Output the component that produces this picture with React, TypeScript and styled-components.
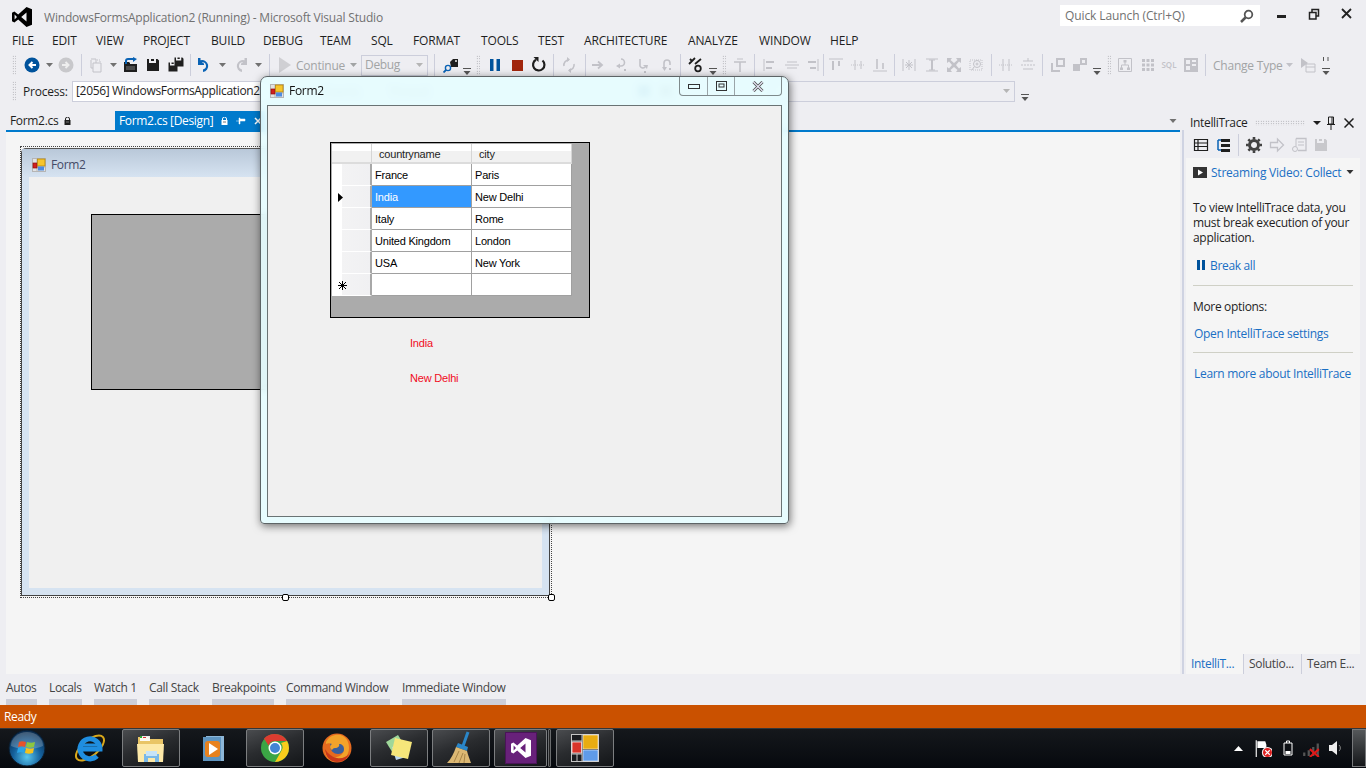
import React from 'react';
import styled, { createGlobalStyle } from 'styled-components';

const ui = `"Open Sans", "Noto Sans", sans-serif`;
const DIS = '#c2c2c8';
const DARK = '#1e1e1e';
const BLUE = '#00539c';
const LINK = '#1a6fc4';

const Global = createGlobalStyle`
  html, body { margin: 0; padding: 0; width: 1366px; height: 768px; overflow: hidden; background: #eeeef2; }
  #root { width: 1366px; height: 768px; }
  * { box-sizing: border-box; }
`;

const Page = styled.div`
  position: relative; width: 1366px; height: 768px; display: flex; flex-direction: column;
  background: #eeeef2; color: ${DARK}; font: 12px/16px ${ui}; letter-spacing: -0.33px; overflow: hidden;
`;
const TitleBar = styled.header`
  height: 30px; display: flex; align-items: center; padding: 4px 0 0 12px; flex: none;
`;
const AppTitle = styled.div`margin: 1px 0 0 12px; color: #717171; flex: 1; font-size: 12px; letter-spacing: -0.19px;`;
const QuickLaunch = styled.div`
  width: 200px; height: 21px; background: #fff; display: flex; align-items: center; justify-content: space-between;
  padding: 0 6px 0 5px; color: #717171; margin-top: -3px; letter-spacing: -0.1px;
`;
const WinControls = styled.div`display: flex; margin: -6px 4px 0 6px; width: 96px; justify-content: space-around;`;
const MenuBar = styled.nav`height: 22px; display: flex; align-items: center; padding-left: 12px; flex: none;`;
const MenuItem = styled.span<{ $w: number }>`width: ${p => p.$w}px; flex: none; letter-spacing: -0.15px;`;
const ToolBar = styled.div<{ $h: number }>`height: ${p => p.$h}px; display: flex; align-items: center; padding-left: 12px; flex: none; color: ${DIS};`;
const Cell = styled.div<{ $w: number }>`
  width: ${p => p.$w}px; flex: none; display: flex; align-items: center; justify-content: center; height: 22px;
`;
const Grip = styled.div`
  width: 4px; height: 20px; flex: none;
  background-image: radial-gradient(#9a9aa0 0.7px, transparent 0.8px); background-size: 2.5px 2.5px;
`;
const Sep = styled.div`width: 1px; height: 22px; background: #cccedb;`;
const ToolText = styled.div<{ $w: number; $dark?: boolean }>`
  width: ${p => p.$w}px; flex: none; padding: 1px 0 0 4px; white-space: nowrap; letter-spacing: -0.22px; color: ${p => (p.$dark ? DARK : '#a2a4a5')};
`;
const Combo = styled.div<{ $w: number; $white?: boolean }>`
  width: ${p => p.$w}px; height: 21px; flex: none; border: 1px solid #cccedb; background: ${p => (p.$white ? '#fff' : 'transparent')};
  color: ${p => (p.$white ? DARK : '#a2a4a5')}; display: flex; align-items: center; justify-content: space-between;
  padding: 0 4px 0 3px; white-space: nowrap; overflow: hidden;
`;
const Spacer = styled.div<{ $w: number }>`width: ${p => p.$w}px; flex: none;`;
const Swatch = styled.div<{ $c: string }>`width: 12px; height: 12px; background: ${p => p.$c};`;
const Workspace = styled.div`flex: none; height: 570px; display: flex;`;
const DocColumn = styled.div`width: 1180px; padding-left: 6px; display: flex; flex-direction: column; flex: none;`;
const DocTabs = styled.div`
  height: 28px; flex: none; display: flex; align-items: flex-end; border-bottom: 2px solid #007acc;
`;
const Tab = styled.div<{ $w: number; $active?: boolean }>`
  width: ${p => p.$w}px; height: 19px; flex: none; display: flex; align-items: center; gap: ${p => (p.$active ? 8 : 6)}px; padding: 1px 0 0 4px; white-space: nowrap;
  background: ${p => (p.$active ? '#007acc' : 'transparent')}; color: ${p => (p.$active ? '#fff' : DARK)};
`;
const TabMenu = styled.div`margin-left: auto; height: 19px; display: flex; align-items: center; margin-right: 3px;`;
const Designer = styled.main`flex: 1; background: #f5f5f5; padding: 14px 0 0 14px;`;
const Selection = styled.div`
  position: relative; width: 532px; height: 452px; padding: 1px 1px 1px 0; border: 1px dotted #444;
`;
const Handle = styled.span<{ $left: string }>`
  position: absolute; left: ${p => p.$left}; bottom: -4px; width: 7px; height: 7px; margin-left: -3px; background: #fff; border: 1px solid #000; border-radius: 2px;
`;
const DesignForm = styled.div`
  height: 100%; border: 1px solid #444; border-top-left-radius: 5px; border-top-right-radius: 5px; border-top-color: #555;
  background: #d6e3f1; display: flex; flex-direction: column;
`;
const DesignTitle = styled.div`
  height: 28px; flex: none; display: flex; align-items: center; gap: 5px; padding: 4px 0 0 10px; color: #444a66; font-size: 12px;
  background: linear-gradient(#b9c8d9, #d6e3f1);
`;
const DesignClient = styled.div`flex: 1; margin: 0 7px 7px; background: #f0f0f0; padding: 37px 0 0 62px;`;
const GridPlaceholder = styled.div`width: 260px; height: 176px; background: #ababab; border: 1px solid #000;`;
const Splitter = styled.div`width: 2px; margin: 26px 2px 0 2px; height: 544px; background: #cfd3e2; flex: none;`;
const ToolPanel = styled.aside`width: 174px; flex: none; display: flex; flex-direction: column;`;
const PanelHead = styled.div`height: 28px; display: flex; align-items: flex-end; padding: 0 0 2px 4px; gap: 6px; flex: none;`;
const PanelTitle = styled.span`width: 65px; flex: none; margin-bottom: -1px;`;
const PanelGrip = styled.div`
  width: 50px; height: 6px; margin: 0 2px 4px -6px; background-image: radial-gradient(#9a9aa0 0.6px, transparent 0.7px); background-size: 2.5px 2.5px;
`;
const PanelClose = styled.span`margin: 0 0 2px 3px; display: flex;`;
const PanelBar = styled.div`height: 26px; display: flex; align-items: center; flex: none; padding-left: 4px;`;
const PanelBody = styled.div`flex: 1; background: #f5f5f5; padding: 6px 7px 0 7px; font-size: 12px; line-height: 15px;`;
const StreamRow = styled.div`display: flex; align-items: center; gap: 4px; height: 16px; margin-bottom: 20px; color: ${LINK}; white-space: nowrap; letter-spacing: -0.22px;`;
const Caret = styled.span`margin-left: auto; margin-right: -1px; display: inline-flex;`;
const Para = styled.p`margin: 0; width: 165px; letter-spacing: -0.3px;`;
const BreakRow = styled.div`display: flex; align-items: center; gap: 5px; margin: 12px 0 12px 4px; color: ${LINK}; height: 16px;`;
const Rule = styled.hr`border: 0; height: 1px; background: #cfd0c6; margin: 0; width: 160px;`;
const PanelLink = styled.div<{ $top: number; $bottom: number }>`color: ${LINK}; margin: ${p => p.$top}px 0 ${p => p.$bottom}px 1px; white-space: nowrap; line-height: 15px; letter-spacing: -0.3px;`;
const PanelLabel = styled.div`color: ${DARK}; margin-top: 13px; line-height: 15px;`;
const PanelTabs = styled.div`height: 20px; flex: none; display: flex; background: #eeeef2;`;
const PanelTab = styled.div<{ $w: number; $active?: boolean; $divided?: boolean }>`
  width: ${p => p.$w}px; flex: none; padding-left: 5px; line-height: 20px; white-space: nowrap;
  background: ${p => (p.$active ? '#f5f5f5' : 'transparent')}; color: ${p => (p.$active ? LINK : '#444')};
  border-right: ${p => (p.$active || p.$divided ? '1px solid #cccedb' : 'none')};
`;
const BottomTabs = styled.div`height: 31px; display: flex; gap: 12px; padding-left: 6px; flex: none;`;
const BottomTab = styled.div<{ $w: number }>`
  width: ${p => p.$w}px; flex: none; display: flex; flex-direction: column; justify-content: flex-end; color: #444; white-space: nowrap;
  &::after { content: ''; display: block; height: 6px; margin-top: 3px; background: #ccced9; }
`;
const StatusBar = styled.footer`height: 23px; background: #ca5100; color: #fff; padding-left: 4px; line-height: 24px; flex: none;`;
const Taskbar = styled.div`
  height: 40px; flex: none; display: flex; align-items: stretch; background: linear-gradient(#15181c, #06090e); border-top: 1px solid #33363a; padding-bottom: 1px;
`;
const Slot = styled.div<{ $w: number; $pl?: number }>`width: ${p => p.$w}px; padding-left: ${p => p.$pl ?? 0}px; flex: none; display: flex; align-items: center; justify-content: center;`;
const TaskButton = styled.div<{ $w: number; $ml?: number }>`
  width: ${p => p.$w}px; margin-left: ${p => p.$ml ?? 0}px; flex: none; display: flex; align-items: center; justify-content: center;
  border: 1px solid #7c7e80; border-radius: 2px; background: linear-gradient(160deg, #4a4c4f 0%, #2a2c2f 45%, #131518 100%);
`;
const TaskSep = styled.div`width: 3px; margin-left: 1px; border: 1px solid #6a6c6e; border-radius: 1px; background: #222;`;
const Tray = styled.div`margin-left: auto; display: flex; align-items: center;`;
const TrayCell = styled.div<{ $w: number }>`width: ${p => p.$w}px; flex: none; display: flex; justify-content: center;`;
const ShowDesktop = styled.div`width: 14px; height: 100%; border: 1px solid #77797b; background: linear-gradient(#55585a, #15171a);`;

/* floating running window */
const RunWindow = styled.section`
  position: absolute; left: 260px; top: 76px; width: 529px; height: 448px; border: 1px solid #5d6466; border-radius: 7px 7px 4px 4px;
  background: rgba(230, 253, 255, 0.9); backdrop-filter: blur(3px); box-shadow: 1px 2px 9px rgba(0, 0, 0, 0.55);
  display: flex; flex-direction: column; padding: 0 6px 6px; letter-spacing: 0;
`;
const RunTitle = styled.div`height: 28px; flex: none; display: flex; align-items: center; gap: 5px; padding-left: 3px; letter-spacing: -0.3px; color: #111;`;
const Caption = styled.div`
  margin-left: auto; align-self: flex-start; height: 19px; width: 103px; display: flex; border: 1px solid #7f8a8c; border-top: none; border-radius: 0 0 4px 4px;
`;
const CapBtn = styled.div<{ $w: number; $last?: boolean }>`
  width: ${p => p.$w}px; flex: none; display: flex; align-items: center; justify-content: center; border-right: ${p => (p.$last ? 'none' : '1px solid #9aa5a8')};
`;
const RunClient = styled.div`
  flex: 1; background: #f0f0f0; border: 1px solid #6a7374; padding: 36px 0 0 62px; font: 11px/13px "Liberation Sans", Arial, sans-serif; letter-spacing: -0.2px;
`;
const DataGrid = styled.div`width: 260px; height: 176px; background: #ababab; border: 1px solid #000; padding: 1px 0 0 1px;`;
const GridHeader = styled.div`display: grid; grid-template-columns: 40px 100px 100px; height: 20px;`;
const HeadCell = styled.div`
  background: linear-gradient(#fff 40%, #f1f1f1 40%, #f1f1f1); border-right: 1px solid #d5d5d5; border-bottom: 2px solid #dcdcdc; padding: 4px 0 0 7px; height: 20px;
`;
const GridRow = styled.div`display: grid; grid-template-columns: 40px 100px 100px; height: 22px;`;
const RowHead = styled.div`
  background: linear-gradient(90deg, #fff 25%, #f3f3f4 25%, #f0f0f2); border-right: 2px solid #a8a8a8; border-bottom: 1px solid #fff; display: flex; align-items: center; padding: 2px 0 0 6px;
`;
const DataCell = styled.div<{ $sel?: boolean }>`
  background: ${p => (p.$sel ? '#3399ff' : '#fff')}; color: ${p => (p.$sel ? '#fff' : '#000')};
  border-right: 1px solid #a0a0a0; border-bottom: 1px solid #a0a0a0; padding: 5px 0 0 3px;
`;
const RedLabel = styled.div<{ $top: number }>`color: #f00b1c; margin: ${p => p.$top}px 0 0 80px; height: 13px;`;

/* icons */
const Svg = styled.svg`display: block; flex: none;`;
const S: React.FC<{ size?: number; w?: number; h?: number; box?: string; children: React.ReactNode }> = ({ size = 16, w, h, box = '0 0 16 16', children }) => (
  <Svg width={w ?? size} height={h ?? size} viewBox={box} fill="none">{children}</Svg>
);
const CaretDown = ({ c = '#717171', w = 7 }: { c?: string; w?: number }) => (
  <S w={w} h={4} box="0 0 7 4"><path d="M0 0h7L3.500 4z" fill={c} /></S>
);
const Overflow = ({ dots = false }: { dots?: boolean }) => (
  <S w={8} h={22} box="0 0 8 22">
    {dots && <path d="M1.500 3v4M6 3v4" stroke="#555" />}
    <path d="M0 14.500h8" stroke="#555" />
    <path d="M.5 17h7l-3.500 4z" fill="#555" />
  </S>
);
const FormIcon = ({ size = 14 }: { size?: number }) => (
  <S size={size} box="0 0 14 14">
    <rect x=".5" y=".5" width="13" height="13" fill="#e3e3e3" stroke="#b5b5b5" />
    <path d="M5 1v12M1 9h12" stroke="#b5b5b5" />
    <rect x="1" y="5" width="4" height="5" fill="#d21f1f" stroke="#8c1010" strokeWidth=".7" />
    <rect x="5.500" y="1" width="7.500" height="7" fill="#f7c52c" stroke="#b48710" strokeWidth=".8" />
    <rect x="6" y="8.500" width="6" height="4" fill="#4d8be0" />
  </S>
);
const VsLogo = ({ c = '#000', w = 20, h = 20 }: { c?: string; w?: number; h?: number }) => (
  <S w={w} h={h} box="0 0 20 20">
    <path fillRule="evenodd" fill={c} d="M14.500 0L20 2.200V17.800L14.500 20 6.200 12.600 2.400 15.600 0 14.200V5.800L2.400 4.400 6.200 7.400ZM14.500 5.600L9.200 10 14.500 14.400ZM2.600 7.600V12.400L5 10Z" />
  </S>
);
const Floppy = ({ c = DARK }: { c?: string }) => (
  <path fill={c} d="M2 2h2v4h7V2h1.500L14 3.500V14H2zM6 2h3v2H6z" />
);
const icons: Record<string, React.ReactNode> = {
  back: <S><circle cx="8" cy="8" r="7.500" fill={BLUE} /><path d="M12 8H6M8.500 5 5.500 8l3 3" stroke="#fff" strokeWidth="2" /></S>,
  fwd: <S><circle cx="8" cy="8" r="7.500" fill="#c8c8cb" /><path d="M4 8h6M7.500 5l3 3-3 3" stroke="#eee" strokeWidth="2" /></S>,
  newp: <S><path d="M5 6h8v9H5zM3 2h5v4M3 3v8h2" stroke={DIS} /><path d="M9 3h3v3" stroke={DIS} strokeDasharray="1 1" /></S>,
  open: <S><path fill={DARK} d="M1 5h5l1 1v1h7v8H1z" /><path fill="#fff" d="M3 9h9v4H3z" opacity=".2" /><path d="M3 7V4a2 2 0 0 1 2-2h6" stroke="#0a63b5" strokeWidth="2" /><path fill="#0a63b5" d="M10 0l4 2-4 3z" /></S>,
  save: <S><Floppy /></S>,
  saveall: <S><g transform="translate(-1 4) scale(.75)"><Floppy /></g><g transform="translate(5 -1) scale(.75)"><Floppy /></g></S>,
  undo: <S><path fill="#0a63b5" d="M1 1h2.500v2.300A6 6 0 1 1 6 15v-2.600A3.500 3.500 0 1 0 4.900 5.400L7 6.500V8H1z" /></S>,
  redo: <S><path fill={DIS} d="M15 1h-2.500v2.300A6 6 0 1 0 10 15v-2.600a3.500 3.500 0 1 1 1.100-7L9 6.500V8h6z" /></S>,
  play: <S w={13} h={16} box="0 0 13 16"><path fill="#cfcfd3" d="M1 0l12 8-12 8z" /></S>,
  find: <S><path fill={DARK} d="M7 5l3-3h5v8H8z" /><circle cx="13" cy="4" r="1" fill="#eee" /><circle cx="5" cy="11" r="2.600" stroke="#0a63b5" strokeWidth="1.400" /><path d="M3 13l-2.500 2.500" stroke="#0a63b5" strokeWidth="1.800" /></S>,
  pause: <S w={10} h={12} box="0 0 10 12"><path fill={BLUE} d="M0 0h3.500v12H0zM6.500 0H10v12H6.500z" /></S>,
  stop: <S w={11} h={11} box="0 0 11 11"><rect width="11" height="11" fill="#a1260d" /></S>,
  restart: <S><path d="M11.500 3.500A5.700 5.700 0 1 1 5 2.800" stroke={DARK} strokeWidth="2.200" /><path fill={DARK} d="M2.500 0h5v5z" /></S>,
  sync: <S><path d="M3 9a5 5 0 0 1 5-6M13 7a5 5 0 0 1-5 6" stroke={DIS} strokeWidth="1.600" /><path fill={DIS} d="M6 0v5l3-2.500zM10 16v-5l-3 2.500z" /></S>,
  right: <S><path d="M2 8h9M8 4.500 12 8l-4 3.500" stroke={DIS} strokeWidth="1.800" /></S>,
  stepin: <S><path d="M8 2A3 3 0 0 1 8 9H5" stroke={DIS} strokeWidth="1.600" /><path fill={DIS} d="M7 6.500v5L3 9zM11 12h2v2h-2z" /></S>,
  stepout: <S><path d="M5 2v7a3 3 0 0 0 5 1" stroke={DIS} strokeWidth="1.600" /><path fill={DIS} d="M8 8h5l-1 4zM9 14h2v2H9z" /></S>,
  stepover: <S><path d="M13 8V6a3 3 0 0 0-6 0v5" stroke={DIS} strokeWidth="1.600" /><path fill={DIS} d="M5 10h5l-2.500 4zM12 11h2v2h-2z" /></S>,
  bp: <S><path d="M1 7l6-6M2 2l2 2M7 7l6-5" stroke={DARK} strokeWidth="1.800" /><circle cx="10" cy="11.500" r="2.800" stroke={DARK} strokeWidth="1.800" /></S>,
  tee: <S><path d="M2 5h12M8 5v10" stroke={DIS} strokeWidth="1.600" /><path d="M5 2h6" stroke={DIS} /></S>,
  alignL: <S><path d="M2 2v12" stroke={DIS} /><path d="M4 5h8M4 11h6" stroke={DIS} strokeWidth="2" /></S>,
  alignC: <S><path d="M3 5h10M1 8h14M3 11h10" stroke={DIS} /></S>,
  alignR: <S><path d="M14 2v12" stroke={DIS} /><path d="M4 5h8M6 11h6" stroke={DIS} strokeWidth="2" /></S>,
  alignT: <S><path d="M1 2h14" stroke={DIS} /><path d="M5 4v9M11 4v5" stroke={DIS} strokeWidth="2" /></S>,
  alignM: <S><path d="M1 8h14" stroke={DIS} strokeDasharray="1 1" /><path d="M5 3v10M11 4v8" stroke={DIS} /></S>,
  alignB: <S><path d="M1 14h14" stroke={DIS} /><path d="M5 2v10M11 6v6" stroke={DIS} strokeWidth="1.600" /></S>,
  widthS: <S><path d="M2 2v12M14 2v12" stroke={DIS} /><path d="M8 3v10M4 8h8M5 5l6 6M11 5l-6 6" stroke={DIS} /></S>,
  heightS: <S><path d="M2 2h12M2 14h12" stroke={DIS} /><path d="M8 3v10" stroke={DIS} strokeWidth="2" /><path d="M5 3h6M5 13h6" stroke={DIS} /></S>,
  sizeB: <S><path fill={DIS} d="M1 1h5L4.500 3 8 6 11.500 3 10 1h5v5l-2-1.500L10 8l3 3.500L15 10v5h-5l1.500-2L8 10l-3.500 3L6 15H1v-5l2 1.500L6 8 3 4.500 1 6z" /></S>,
  zoomB: <S><path d="M2 3h12v10H2z" stroke={DIS} strokeDasharray="1 1" /><circle cx="9" cy="7" r="3.500" stroke={DIS} /><path d="M7.500 7h3M9 5.500v3M6 10l-2 3" stroke={DIS} /></S>,
  spaceH: <S><path d="M5 2v12M11 2v12" stroke={DIS} /><path d="M1 8h14" stroke={DIS} strokeDasharray="1 1" /></S>,
  spaceV: <S><path d="M3 4h10M3 12h10" stroke={DIS} /><path d="M1 8h14" stroke={DIS} strokeDasharray="2 1" /><path d="M8 1v3" stroke={DIS} /></S>,
  front: <S><path d="M7 2h7v7H7z" stroke={DIS} strokeWidth="2" /><path d="M2 6v8h8" stroke={DIS} strokeWidth="2" /></S>,
  backO: <S><path fill={DIS} d="M8 1h7v7H8zM1 7h7v7H1z" /><path fill="#eeeef2" d="M10 3h3v3h-3z" /></S>,
  tree: <S><path d="M1.500 1.500h13v13h-13z" stroke={DIS} /><path d="M8 5v3M4.500 11V8h7v3" stroke={DIS} /><path fill={DIS} d="M6.500 3h3v2.500h-3zM3 10.500h3V13H3zM10 10.500h3V13h-3z" /></S>,
  dots: <S><path fill={DIS} d="M2 2h3v3H2zM6.500 2h3v3h-3zM11 2h3v3h-3zM2 6.500h3v3H2zM6.500 6.500h3v3h-3zM11 6.500h3v3h-3zM2 11h3v3H2zM6.500 11h3v3h-3zM11 11h3v3h-3z" /></S>,
  table: <S><path fill={DIS} d="M1 1h14v14H1z" /><path fill="#eeeef2" d="M3 3h4v4H3zM9 3h4v2H9zM9 7h4v2H9zM3 9h4v4H3z" /></S>,
  changeIc: <S><path fill={DIS} d="M1 1l7 5-7 5z" /><path d="M6 7h9v8H6zM6 10h9" stroke={DIS} /></S>,
  list: <S><path d="M1.500 2.500h13v11h-13zM1.500 6h13M1.500 9.500h13M5 2.500v11" stroke={DARK} strokeWidth="1.200" /></S>,
  calls: <S><path d="M6 2h9v3H6zM6 7h9v3H6zM6 12h9v3H6z" fill={DARK} /><path d="M3 3v10M3 3h3M3 13h3" stroke="#0a63b5" strokeWidth="1.500" /></S>,
  gear: <S><circle cx="8" cy="8" r="4.500" stroke="#424242" strokeWidth="3" /><path d="M8 0v16M0 8h16M2.300 2.300l11.400 11.400M13.700 2.300 2.300 13.700" stroke="#424242" strokeWidth="2.600" strokeDasharray="2.500 11" /></S>,
  arrowO: <S><path d="M1.500 5.500h7V2l6 6-6 6v-3.500h-7z" stroke={DIS} strokeWidth="1.300" /></S>,
  log: <S><path d="M5 1.500h10v12H7" stroke={DIS} strokeWidth="1.300" /><path d="M5 1.500v8M7 5h6M7 8h6" stroke={DIS} /><circle cx="4" cy="12" r="2.500" stroke={DIS} /></S>,
  saveG: <S><Floppy c="#c8c8cc" /></S>,
  pinD: <S w={8} h={14} box="0 0 8 14"><path d="M1.500 1h5v7h-5zM0 8.500h8M4 9v5M5 1v7" stroke={DARK} /></S>,
  xD: <S size={10} box="0 0 10 10"><path d="M.5.500l9 9M9.500.500l-9 9" stroke={DARK} strokeWidth="1.500" /></S>,
  lock: <S w={7} h={8} box="0 0 7 8"><path d="M1.500 3V2a2 2 0 0 1 4 0v1" stroke="currentColor" /><path fill="currentColor" d="M.500 3h6v5h-6z" /><path d="M2 5h3" stroke="#777" /></S>,
  pinW: <S size={10} box="0 0 10 10"><path d="M0 5h3M3 2v6h1V5h5V3H4V2z" fill="#fff" stroke="#fff" strokeWidth=".5" /></S>,
  xW: <S size={8} box="0 0 8 8"><path d="M1 1l6 6M7 1 1 7" stroke="#fff" strokeWidth="1.500" /></S>,
  searchG: <S size={14} box="0 0 14 14"><circle cx="8.500" cy="5.500" r="3.800" stroke="#555" strokeWidth="1.800" /><path d="M5.500 8.500 1 13" stroke="#555" strokeWidth="2.500" /></S>,
};

type Tool =
  | { k: 'i'; n: string; w: number } | { k: 'car'; w: number; c?: string } | { k: 'sep'; w: number } | { k: 'grip' }
  | { k: 'sp'; w: number } | { k: 'ovf'; w: number; dots?: boolean } | { k: 't'; s: string; w: number }
  | { k: 'combo'; s: string; w: number } | { k: 'sql'; w: number };
const i = (n: string, w = 22): Tool => ({ k: 'i', n, w });
const car = (w: number, c?: string): Tool => ({ k: 'car', w, c });
const sep = (w: number): Tool => ({ k: 'sep', w });
const grip: Tool = { k: 'grip' };
const sp = (w: number): Tool => ({ k: 'sp', w });
const ovf = (w = 12, dots = false): Tool => ({ k: 'ovf', w, dots });

const tools1: Tool[] = [
  grip, sp(6), i('back', 20), car(14), i('fwd', 20), sep(10), i('newp', 20), car(14), i('open'), i('save'), i('saveall', 24), sep(4),
  i('undo', 26), car(8), i('redo', 28), car(8), sep(14), i('play', 16), { k: 't', s: 'Continue', w: 54 }, car(14, '#a2a4a5'), sp(1),
  { k: 'combo', s: 'Debug', w: 67 }, sep(13), i('find', 20), ovf(), sp(3), grip, sp(4), i('pause'), i('stop'), i('restart'), sep(6), i('sync', 26), sep(6),
  i('right', 20), sp(2), i('stepin'), i('stepout'), i('stepover'), sep(8), sp(1), i('bp'), ovf(), sp(3), grip, sp(3), i('tee'), sep(6), sp(2),
  i('alignL'), i('alignC'), i('alignR', 18), sep(4), i('alignT'), i('alignM'), i('alignB'), sep(6), sp(1), i('widthS'), i('heightS', 23), i('sizeB'), i('zoomB'),
  sep(8), i('spaceH'), i('spaceV'), sep(6), sp(2), i('front'), i('backO'), ovf(), sp(4), grip, sp(3), i('tree'), sp(1), i('dots'),
  { k: 'sql', w: 20 }, sp(1), i('table'), sep(7), { k: 't', s: 'Change Type', w: 75 }, car(10, DIS), sp(3), i('changeIc'), ovf(14, true),
];

const SqlGlyph = styled.span`font-size: 8px; color: ${DIS}; font-weight: 600; letter-spacing: 0;`;
const ToolRow = ({ items }: { items: Tool[] }) => (
  <>
    {items.map((t, idx) => {
      switch (t.k) {
        case 'i': return <Cell key={idx} $w={t.w}>{icons[t.n]}</Cell>;
        case 'car': return <Cell key={idx} $w={t.w}><CaretDown c={t.c} /></Cell>;
        case 'sep': return <Cell key={idx} $w={t.w}><Sep /></Cell>;
        case 'grip': return <Grip key={idx} />;
        case 'sp': return <Spacer key={idx} $w={t.w} />;
        case 'ovf': return <Cell key={idx} $w={t.w}><Overflow dots={t.dots} /></Cell>;
        case 't': return <ToolText key={idx} $w={t.w}>{t.s}</ToolText>;
        case 'combo': return <Combo key={idx} $w={t.w}>{t.s}<CaretDown c="#b5b5b5" /></Combo>;
        case 'sql': return <Cell key={idx} $w={t.w}><SqlGlyph>SQL</SqlGlyph></Cell>;
      }
    })}
  </>
);

const menus: [string, number][] = [
  ['FILE', 40], ['EDIT', 44], ['VIEW', 47], ['PROJECT', 68], ['BUILD', 52], ['DEBUG', 57], ['TEAM', 51], ['SQL', 42], ['FORMAT', 68],
  ['TOOLS', 57], ['TEST', 46], ['ARCHITECTURE', 104], ['ANALYZE', 71], ['WINDOW', 71], ['HELP', 40],
];
const rows = [['France', 'Paris'], ['India', 'New Delhi'], ['Italy', 'Rome'], ['United Kingdom', 'London'], ['USA', 'New York'], ['', '']];
const bottoms: [string, number][] = [['Autos', 31], ['Locals', 33], ['Watch 1', 43], ['Call Stack', 51], ['Breakpoints', 62], ['Command Window', 104], ['Immediate Window', 104]];

/* taskbar artwork */
const Orb = () => (
  <S size={38} box="0 0 38 38">
    <defs>
      <radialGradient id="orb" cx="50%" cy="75%" r="70%"><stop offset="0" stopColor="#58c6ee" /><stop offset=".55" stopColor="#14609c" /><stop offset="1" stopColor="#0b2c4e" /></radialGradient>
    </defs>
    <circle cx="19" cy="19" r="18" fill="url(#orb)" stroke="#0a1a2a" />
    <path d="M3 17a16 14 0 0 1 32 0c-8 4-24 4-32 0z" fill="#fff" opacity=".22" />
    <path d="M11 13c2-1 4-1 7 0l-1 5c-2-1-5-1-7 0z" fill="#e8532a" />
    <path d="M19 13c3 1 5 1 8 0l-1 5c-3 1-5 1-8 0z" fill="#8dc63f" />
    <path d="M10 19c2-1 5-1 7 0l-1 5c-2-1-5-1-7 0z" fill="#2aa4e8" />
    <path d="M18 19c3 1 5 1 8 0l-1 5c-3 1-5 1-8 0z" fill="#f6c21c" />
  </S>
);
const IE = () => (
  <S size={34} box="0 0 34 34">
    <ellipse cx="17" cy="17" rx="17" ry="8" transform="rotate(-40 17 17)" stroke="#d9a81a" strokeWidth="2" />
    <path d="M8 18h19a10 10 0 1 0-3 7" stroke="#1f8ee0" strokeWidth="5" />
    <path d="M9 14h15" stroke="#1f8ee0" strokeWidth="3" />
  </S>
);
const Folder = () => (
  <S size={32} box="0 0 32 32">
    <path fill="#e9c566" d="M3 5h10l2 2h13v21H3z" />
    <path fill="#fff" d="M5 4h10v5H5z" opacity=".9" /><path fill="#d33" d="M8 5h3v1H8z" /><path fill="#3a3" d="M5 4h2v2H5z" />
    <path fill="#fde9a8" d="M2 12h27l-1 18H3z" />
    <path fill="#79b8e8" d="M9 22h15v8H9z" /><path fill="#c7e3f7" d="M11 19h11v5H11z" /><path fill="#fde9a8" d="M13 26h7v4h-7z" />
  </S>
);
const Wmp = () => (
  <S size={30} box="0 0 30 30">
    <path fill="#8db7d8" d="M8 3h18v25H8z" /><path fill="#5f95c0" d="M5 4h18v24H5z" />
    <rect x="7" y="8" width="15" height="16" rx="3" fill="#e8821e" />
    <path fill="#fff" d="M11 10l9 6-9 6z" />
  </S>
);
const Chrome = () => (
  <S size={30} box="0 0 30 30">
    <circle cx="15" cy="15" r="14" fill="#3ba545" />
    <path fill="#dc3c30" d="M15 1a14 14 0 0 1 12.100 7H15a7 7 0 0 0-6.500 4.400L4 5.500A14 14 0 0 1 15 1z" />
    <path fill="#f9cd1c" d="M27.100 8A14 14 0 0 1 15 29l6-10.500A7 7 0 0 0 21 10z" />
    <circle cx="15" cy="15" r="6.500" fill="#fff" /><circle cx="15" cy="15" r="5" fill="#4285d4" />
  </S>
);
const Firefox = () => (
  <S size={32} box="0 0 32 32">
    <circle cx="16" cy="16" r="14.500" fill="#e66a1f" />
    <circle cx="17" cy="14" r="8" fill="#3a5f9c" />
    <path fill="#f3a32a" d="M5 10c3-7 12-9 17-6 5 3 6 8 6 12 0 8-6 14-13 14C9 30 3 24 4 17c1 4 4 7 8 8 6 1 11-3 11-8 0-3-2-5-5-5 1 2-1 4-4 4-2 0-3 2-3 2-3-2-2-5 0-6-2-1-4-1-6 0z" />
    <path fill="#c9381a" d="M4 17c0 7 5 13 12 13 6 0 10-3 12-8-3 3-7 5-12 4-5-1-9-4-12-9z" />
  </S>
);
const Sticky = () => (
  <S size={32} box="0 0 32 32">
    <path fill="#9fd79a" d="M3 10 15 3l8 13-12 7z" />
    <path fill="#bcd8ee" d="M9 15l10-3 4 13-10 3z" />
    <path fill="#f6e67a" d="M12 6l17 4-4 17-17-4z" />
  </S>
);
const Broom = () => (
  <S size={34} box="0 0 34 34">
    <path d="M24 1l-5 14" stroke="#2a86c8" strokeWidth="3" />
    <path fill="#2a86c8" d="M14 12l10 4-1 4-11-4z" />
    <path fill="#dcb873" d="M12 16l11 4c1 4 3 9 4 12H3c4-4 7-10 9-16z" />
    <path d="M10 31l5-11M15 32l4-10M20 32l1-9" stroke="#a78548" />
  </S>
);
const TileBg = styled.div`width: 32px; height: 32px; background: #68217a; border: 1px solid #4a1458; display: flex; align-items: center; justify-content: center;`;
const VsTile = () => (
  <TileBg><VsLogo c="#fff" w={20} h={22} /></TileBg>
);
const BigForm = () => (
  <S size={28} box="0 0 28 28">
    <rect x=".5" y=".5" width="27" height="27" fill="#1a1c20" stroke="#c5c5c5" />
    <path d="M1 7h10M1 20h10M6 20v7M11 1v26" stroke="#c5c5c5" />
    <rect x="1" y="8" width="9.500" height="11" fill="#d9342a" stroke="#fff" strokeWidth=".7" />
    <rect x="12" y="1" width="15" height="14" fill="#e8ac12" stroke="#fff" strokeWidth=".5" />
    <rect x="12" y="16" width="15" height="11" fill="#5f9be8" stroke="#fff" strokeWidth=".5" />
  </S>
);

export default function App() {
  return (
    <Page>
      <Global />
      <TitleBar>
        <VsLogo />
        <AppTitle>WindowsFormsApplication2 (Running) - Microsoft Visual Studio</AppTitle>
        <QuickLaunch>Quick Launch (Ctrl+Q){icons.searchG}</QuickLaunch>
        <WinControls>
          <S size={12} box="0 0 12 12"><rect x="1" y="7" width="9" height="3" fill="#222" /></S>
          <S size={12} box="0 0 12 12"><path d="M1.500 4.500h6.500v6.500H1.500zM4 4V1.500h6.500V8H8.500" stroke="#222" strokeWidth="1.500" /></S>
          <S size={11} box="0 0 11 11"><path d="M1 1l9 9M10 1l-9 9" stroke="#222" strokeWidth="1.800" /></S>
        </WinControls>
      </TitleBar>
      <MenuBar>{menus.map(([m, w]) => <MenuItem key={m} $w={w}>{m}</MenuItem>)}</MenuBar>
      <ToolBar $h={26}><ToolRow items={tools1} /></ToolBar>
      <ToolBar $h={26}>
        <Grip /><Spacer $w={3} />
        <ToolText $w={53} $dark>Process:</ToolText>
        <Combo $w={200} $white>[2056] WindowsFormsApplication2</Combo>
        <Spacer $w={48} /><ToolText $w={65}>Events</ToolText><ToolText $w={40}>Thread:</ToolText>
        <Spacer $w={208} /><Cell $w={22}><Swatch $c="#8aa8c8" /></Cell><Cell $w={22}><Swatch $c="#bcbcc2" /></Cell>
        <Spacer $w={94} /><Combo $w={244}><span /><CaretDown c="#b5b5b5" /></Combo>
        <Spacer $w={6} /><Overflow />
      </ToolBar>
      <Workspace>
        <DocColumn>
          <DocTabs>
            <Tab $w={109}>Form2.cs {icons.lock}</Tab>
            <Tab $w={150} $active>Form2.cs [Design] {icons.lock}{icons.pinW}{icons.xW}</Tab>
            <TabMenu><CaretDown c="#717171" w={8} /></TabMenu>
          </DocTabs>
          <Designer>
            <Selection>
              <DesignForm>
                <DesignTitle><FormIcon />Form2</DesignTitle>
                <DesignClient><GridPlaceholder /></DesignClient>
              </DesignForm>
              <Handle $left="264px" />
              <Handle $left="100%" />
            </Selection>
          </Designer>
        </DocColumn>
        <Splitter />
        <ToolPanel>
          <PanelHead>
            <PanelTitle>IntelliTrace</PanelTitle>
            <PanelGrip />
            <S w={8} h={14} box="0 0 8 14"><path d="M0 5h8l-4 4z" fill={DARK} /></S>
            {icons.pinD}
            <PanelClose>{icons.xD}</PanelClose>
          </PanelHead>
          <PanelBar>
            <Cell $w={22}>{icons.list}</Cell><Cell $w={22}>{icons.calls}</Cell><Cell $w={8}><Sep /></Cell>
            <Cell $w={24}>{icons.gear}</Cell><Cell $w={21}>{icons.arrowO}</Cell><Cell $w={23}>{icons.log}</Cell><Cell $w={21}>{icons.saveG}</Cell>
          </PanelBar>
          <PanelBody>
            <StreamRow>
              <S w={14} h={11} box="0 0 14 11"><rect width="14" height="11" fill="#333" /><path d="M5 2.500l5 3-5 3z" fill="#fff" /></S>
              Streaming Video: Collect
              <Caret><CaretDown c="#333" w={8} /></Caret>
            </StreamRow>
            <Para>To view IntelliTrace data, you must break execution of your application.</Para>
            <BreakRow><S w={8} h={10} box="0 0 8 10"><path fill={BLUE} d="M0 0h3v10H0zM5 0h3v10H5z" /></S>Break all</BreakRow>
            <Rule />
            <PanelLabel>More options:</PanelLabel>
            <PanelLink $top={12} $bottom={11}>Open IntelliTrace settings</PanelLink>
            <Rule />
            <PanelLink $top={13} $bottom={0}>Learn more about IntelliTrace</PanelLink>
          </PanelBody>
          <PanelTabs>
            <PanelTab $w={58} $active>IntelliT...</PanelTab>
            <PanelTab $w={58} $divided>Solutio...</PanelTab>
            <PanelTab $w={57}>Team E...</PanelTab>
          </PanelTabs>
        </ToolPanel>
      </Workspace>
      <BottomTabs>{bottoms.map(([b, w]) => <BottomTab key={b} $w={w}>{b}</BottomTab>)}</BottomTabs>
      <StatusBar>Ready</StatusBar>
      <Taskbar>
        <Slot $w={54}><Orb /></Slot>
        <Slot $w={68} $pl={4}><IE /></Slot>
        <TaskButton $w={58}><Folder /></TaskButton>
        <Slot $w={66}><Wmp /></Slot>
        <TaskButton $w={58}><Chrome /></TaskButton>
        <Slot $w={66}><Firefox /></Slot>
        <TaskButton $w={58}><Sticky /></TaskButton>
        <TaskButton $w={58} $ml={4}><Broom /></TaskButton>
        <TaskButton $w={53} $ml={4}><VsTile /></TaskButton>
        <TaskSep />
        <TaskButton $w={58} $ml={5}><BigForm /></TaskButton>
        <Tray>
          <TrayCell $w={20}><S w={9} h={5} box="0 0 9 5"><path d="M0 5l4.500-5L9 5z" fill="#fff" /></S></TrayCell>
          <TrayCell $w={30}><S size={18}><path d="M2 1v16" stroke="#fff" /><path d="M3 2h7l1 3v3H3z" fill="#fff" /><circle cx="12" cy="12" r="4.500" fill="#e02020" stroke="#eee" /><path d="M10 10l4 4M14 10l-4 4" stroke="#fff" /></S></TrayCell>
          <TrayCell $w={20}><S w={10} h={16} box="0 0 10 16"><path d="M1 3h8v12H1zM3.500 3V1h3v2" stroke="#fff" fill="none" /><rect x="2.500" y="11" width="5" height="3" fill="#fff" /></S></TrayCell>
          <TrayCell $w={26}><S size={18}><path fill="#555" d="M1 12h2v3H1zM5 10h2v5H5zM9 7h2v8H9zM13 4h2v11h-2z" /><path d="M7 9l8 7M15 9l-8 7" stroke="#e01818" strokeWidth="1.800" /></S></TrayCell>
          <TrayCell $w={24}><S size={16}><path fill="#eee" d="M1 5h3l5-4v14l-5-4H1z" /><path d="M11 5a4 4 0 0 1 0 6" stroke="#888" /></S></TrayCell>
          <Spacer $w={4} />
          <ShowDesktop />
        </Tray>
      </Taskbar>

      <RunWindow>
        <RunTitle>
          <FormIcon />Form2
          <Caption>
            <CapBtn $w={28}><S w={12} h={6} box="0 0 12 6"><rect x=".5" y="1.500" width="11" height="4" stroke="#333" /></S></CapBtn>
            <CapBtn $w={27}><S w={11} h={10} box="0 0 11 10"><rect x=".5" y=".5" width="10" height="9" stroke="#333" /><rect x="3" y="3" width="5" height="3" stroke="#333" /></S></CapBtn>
            <CapBtn $w={46} $last><S w={12} h={11} box="0 0 12 11"><path d="M1.500 1 10.500 10M10.500 1 1.500 10" stroke="#555" strokeWidth="3" /><path d="M1.500 1 10.500 10M10.500 1 1.500 10" stroke="#eef" strokeWidth="1.200" /></S></CapBtn>
          </Caption>
        </RunTitle>
        <RunClient>
          <DataGrid>
            <GridHeader><HeadCell /><HeadCell>countryname</HeadCell><HeadCell>city</HeadCell></GridHeader>
            {rows.map((r, idx) => (
              <GridRow key={idx}>
                <RowHead>
                  {idx === 1 && <S w={5} h={9} box="0 0 5 9"><path d="M0 0l5 4.500L0 9z" fill="#000" /></S>}
                  {idx === 5 && <S size={9} box="0 0 9 9"><path d="M4.500 0v9M0 4.500h9M1 1l7 7M8 1 1 8" stroke="#000" /></S>}
                </RowHead>
                <DataCell $sel={idx === 1}>{r[0]}</DataCell>
                <DataCell>{r[1]}</DataCell>
              </GridRow>
            ))}
          </DataGrid>
          <RedLabel $top={19}>India</RedLabel>
          <RedLabel $top={22}>New Delhi</RedLabel>
        </RunClient>
      </RunWindow>
    </Page>
  );
}
